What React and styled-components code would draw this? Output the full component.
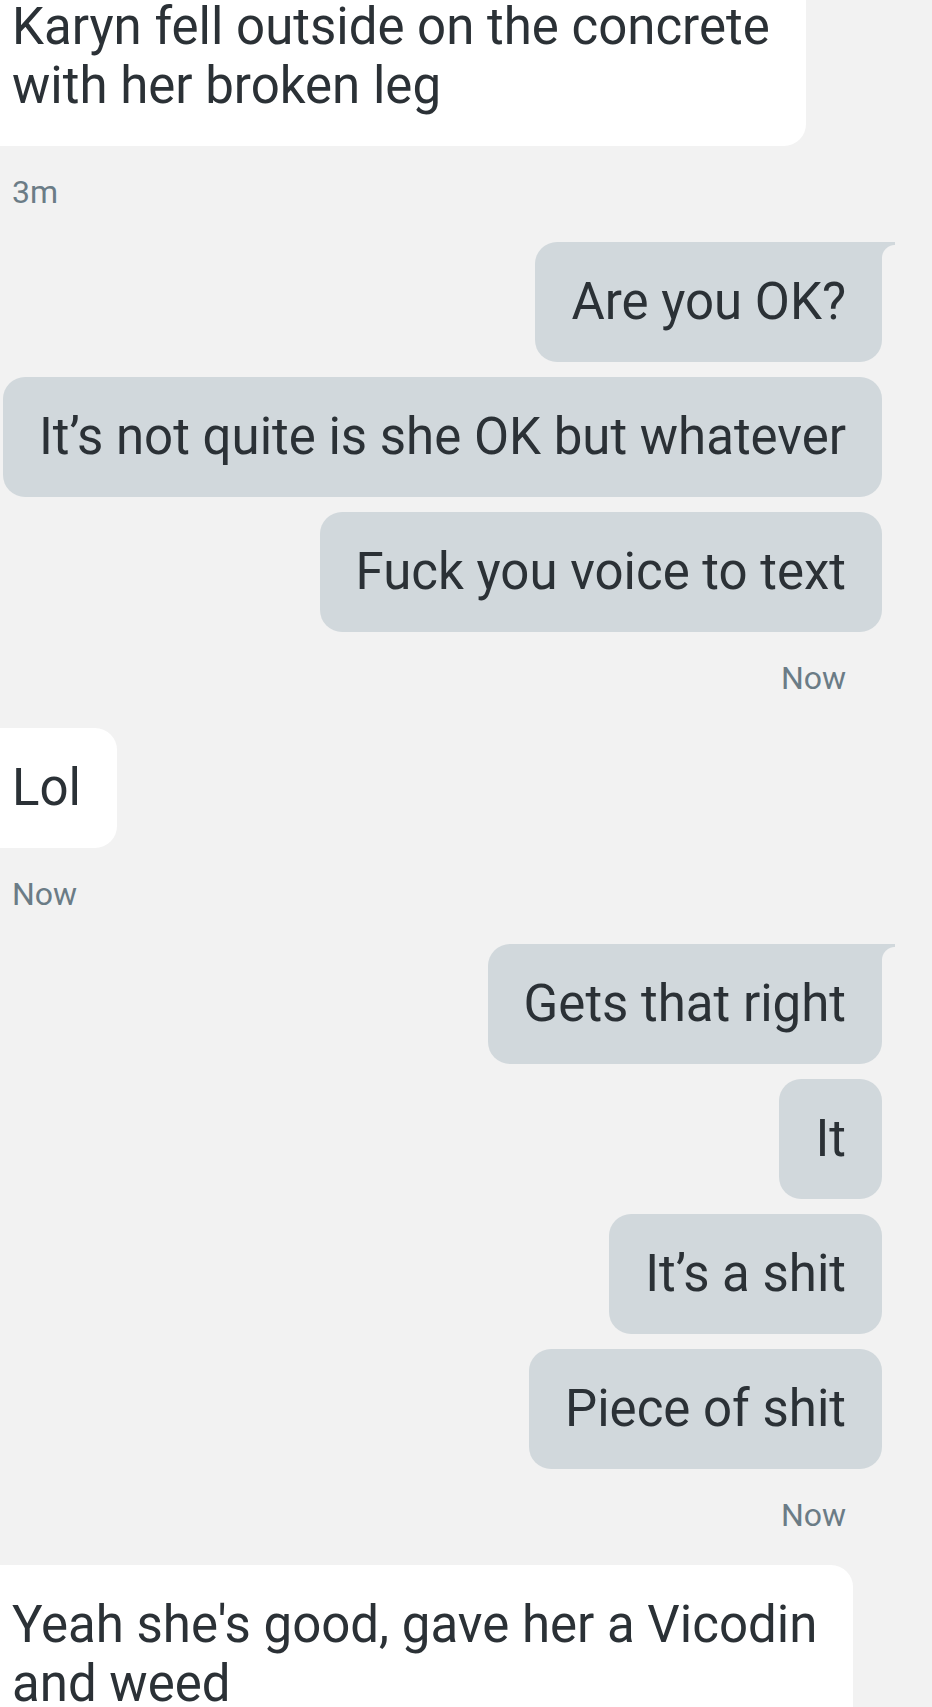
import React from "react";
import styled, { createGlobalStyle, css } from "styled-components";

const GlobalStyle = createGlobalStyle`
  html, body {
    margin: 0;
    padding: 0;
    background: #f2f2f2;
    overflow: hidden;
  }
  body {
    font-family: Roboto, "Noto Sans", "Liberation Sans", sans-serif;
  }
`;

const Thread = styled.div`
  display: flex;
  flex-direction: column;
  margin: -33px 50px 0 -24px;
`;

const Group = styled.div`
  display: flex;
  flex-direction: column;
  align-items: ${(p) => (p.$out ? "flex-end" : "flex-start")};
  gap: 15px;
  & + & {
    margin-top: 30px;
  }
`;

const Bubble = styled.div`
  position: relative;
  box-sizing: content-box;
  padding: 30px 36px 31px;
  border-radius: 22px;
  background: ${(p) => (p.$out ? "#d1d8dc" : "#ffffff")};
  color: #2b3136;
  font-size: 51px;
  line-height: 59px;
  font-weight: 400;
  white-space: pre-line;
  ${(p) =>
    p.$tail &&
    css`
      border-top-right-radius: 0;
      &::after {
        content: "";
        position: absolute;
        top: 0;
        right: -13px;
        width: 13px;
        height: 16px;
        background: radial-gradient(
          circle at 100% 100%,
          transparent 12.5px,
          #d1d8dc 13.5px
        );
      }
    `}
`;

const Stamp = styled.div`
  margin-top: 11px;
  padding: 0 36px;
  font-size: 32px;
  line-height: 40px;
  color: #6b7c86;
`;

const groups = [
  {
    out: false,
    msgs: ["Karyn fell outside on the concrete\nwith her broken leg"],
    time: "3m",
  },
  {
    out: true,
    msgs: [
      "Are you OK?",
      "It\u2019s not quite is she OK but whatever",
      "Fuck you voice to text",
    ],
    time: "Now",
  },
  { out: false, msgs: ["Lol"], time: "Now" },
  {
    out: true,
    msgs: ["Gets that right", "It", "It\u2019s a shit", "Piece of shit"],
    time: "Now",
  },
  {
    out: false,
    msgs: ["Yeah she's good, gave her a Vicodin\nand weed"],
  },
];

export default function App() {
  return (
    <>
      <GlobalStyle />
      <Thread>
        {groups.map((g, i) => (
          <Group key={i} $out={g.out}>
            {g.msgs.map((m, j) => (
              <Bubble key={j} $out={g.out} $tail={g.out && j === 0}>
                {m}
              </Bubble>
            ))}
            {g.time && <Stamp>{g.time}</Stamp>}
          </Group>
        ))}
      </Thread>
    </>
  );
}
